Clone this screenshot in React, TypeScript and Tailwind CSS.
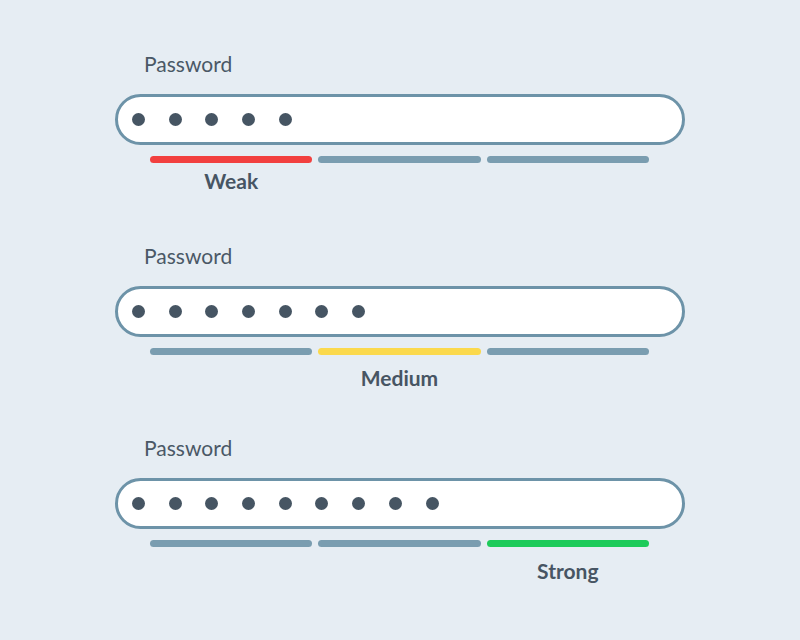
const levels = [
  { dots: 5, active: 0, color: 'bg-[#f2403f]', label: 'Weak', labelGap: 'mt-[6px]' },
  { dots: 7, active: 1, color: 'bg-[#fbd94c]', label: 'Medium', labelGap: 'mt-[11px]' },
  { dots: 9, active: 2, color: 'bg-[#1ecb5a]', label: 'Strong', labelGap: 'mt-[12px]' },
];

function PasswordField({ dots, active, color, label, labelGap }: (typeof levels)[number]) {
  return (
    <div className="flex flex-col">
      <p className="pl-[29px] text-[21px] leading-6 text-[#4a5866]">Password</p>
      <div className="mt-[18px] flex h-[51px] items-center gap-[23.7px] rounded-full border-[3px] border-[#6d93a8] bg-white pl-[14px]">
        {Array.from({ length: dots }).map((_, i) => (
          <span key={i} className="h-[13px] w-[13px] rounded-full bg-[#465563]" />
        ))}
      </div>
      <div className="mt-[11px] grid grid-cols-3 gap-[6px] pl-[35px] pr-[36px]">
        {[0, 1, 2].map((i) => (
          <div key={i} className="flex flex-col items-center">
            <div className={`h-[7px] w-full rounded-full ${i === active ? color : 'bg-[#7a9db0]'}`} />
            {i === active && (
              <span className={`${labelGap} text-[21px] font-bold leading-6 text-[#475563]`}>{label}</span>
            )}
          </div>
        ))}
      </div>
    </div>
  );
}

export default function App() {
  return (
    <div
      className="h-[640px] w-[800px] bg-[#e6edf3] pt-[52px] pl-[115px]"
      style={{ fontFamily: 'Lato, "Open Sans", sans-serif' }}
    >
      <div className="flex w-[570px] flex-col">
        {levels.map((l, i) => (
          <div key={l.label} className={i === 0 ? '' : i === 1 ? 'mt-[51px]' : 'mt-[46px]'}>
            <PasswordField {...l} />
          </div>
        ))}
      </div>
    </div>
  );
}
